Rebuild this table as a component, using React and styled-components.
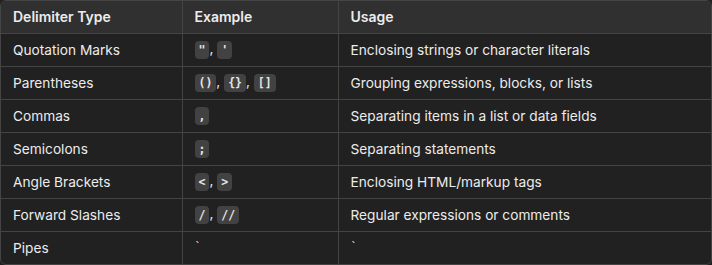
import React from 'react';
import styled, { createGlobalStyle } from 'styled-components';

const Global = createGlobalStyle`
  html, body { margin: 0; padding: 0; background: #212121; }
  body { font-family: Inter, "Noto Sans", sans-serif; -webkit-font-smoothing: antialiased; }
`;

const Frame = styled.div`
  width: 712px;
  height: 265px;
  box-sizing: border-box;
  border: 1px solid #444;
  border-radius: 6px;
  overflow: hidden;
  background: #212121;
`;

const Table = styled.table`
  width: 100%;
  border-collapse: collapse;
  table-layout: fixed;
  color: #ececec;
  font-size: 14px;
`;

const Row = styled.tr`
  height: ${p => (p.$head ? '32px' : '33px')};
`;

const Th = styled.th`
  box-sizing: border-box;
  background: #303030;
  text-align: left;
  font-weight: 600;
  padding: 0 12px;
  border-bottom: 1px solid #444;
  border-left: ${p => (p.$first ? 'none' : '1px solid #444')};
  width: ${p => p.$w || 'auto'};
`;

const Td = styled.td`
  padding: 0 12px;
  border-top: 1px solid #444;
  border-left: ${p => (p.$first ? 'none' : '1px solid #444')};
  font-size: 13.7px;
  font-weight: 400;
  white-space: nowrap;
`;

const Code = styled.code`
  display: inline-block;
  background: #424242;
  color: #e6e6e6;
  font-family: "DejaVu Sans Mono", "Liberation Mono", monospace;
  font-size: 11.5px;
  line-height: 18px;
  padding: 0 4px;
  border-radius: 4px;
  vertical-align: middle;
  font-weight: 600;
`;

const Tick = styled.span`
  font-family: "DejaVu Sans Mono", monospace;
  font-size: 11px;
  vertical-align: 3px;
`;

const rows = [
  ['Quotation Marks', ['"', "'"], 'Enclosing strings or character literals'],
  ['Parentheses', ['()', '{}', '[]'], 'Grouping expressions, blocks, or lists'],
  ['Commas', [','], 'Separating items in a list or data fields'],
  ['Semicolons', [';'], 'Separating statements'],
  ['Angle Brackets', ['<', '>'], 'Enclosing HTML/markup tags'],
  ['Forward Slashes', ['/', '//'], 'Regular expressions or comments'],
];

export default function App() {
  return (
    <>
      <Global />
      <Frame>
        <Table>
          <thead>
            <Row $head>
              <Th $first $w="181px">Delimiter Type</Th>
              <Th $w="156px">Example</Th>
              <Th>Usage</Th>
            </Row>
          </thead>
          <tbody>
            {rows.map(([type, ex, usage]) => (
              <Row key={type}>
                <Td $first>{type}</Td>
                <Td>
                  {ex.map((e, i) => (
                    <React.Fragment key={e}>
                      {i > 0 && ', '}
                      <Code>{e}</Code>
                    </React.Fragment>
                  ))}
                </Td>
                <Td>{usage}</Td>
              </Row>
            ))}
            <Row>
              <Td $first>Pipes</Td>
              <Td><Tick>`</Tick></Td>
              <Td><Tick>`</Tick></Td>
            </Row>
          </tbody>
        </Table>
      </Frame>
    </>
  );
}
